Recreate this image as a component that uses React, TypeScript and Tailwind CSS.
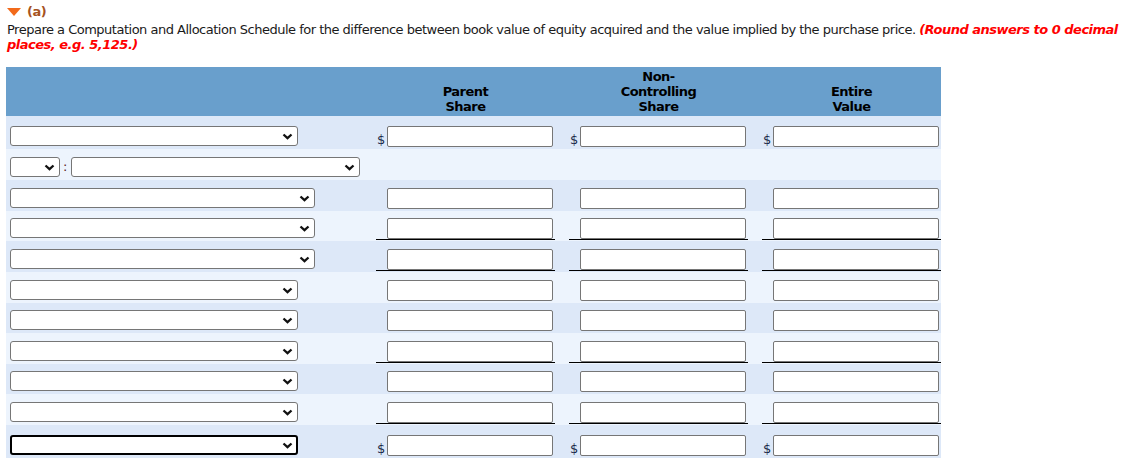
import React from 'react';

type Row = {
  h: string;
  selW?: string;
  pair?: boolean;
  dollar?: boolean;
  under?: boolean;
  focus?: boolean;
};

const rows: Row[] = [
  { h: 'h-[33px]', selW: 'w-[288px]', dollar: true },
  { h: 'h-[31px]', pair: true },
  { h: 'h-[31px]', selW: 'w-[305px]' },
  { h: 'h-[30px]', selW: 'w-[305px]', under: true },
  { h: 'h-[31px]', selW: 'w-[305px]', under: true },
  { h: 'h-[31px]', selW: 'w-[288px]' },
  { h: 'h-[30px]', selW: 'w-[288px]' },
  { h: 'h-[31px]', selW: 'w-[288px]', under: true },
  { h: 'h-[30px]', selW: 'w-[288px]' },
  { h: 'h-[31px]', selW: 'w-[288px]', under: true },
  { h: 'h-[33px]', selW: 'w-[288px]', dollar: true, focus: true },
];

const Chevron = () => (
  <svg width="11" height="7" viewBox="0 0 11 7" className="shrink-0">
    <polyline points="1.5,1.5 5.5,5.2 9.5,1.5" fill="none" stroke="#111" strokeWidth="2.3" />
  </svg>
);

const Select = ({ w, focus }: { w: string; focus?: boolean }) => (
  <div
    className={
      focus
        ? `${w} h-[20px] bg-white border-2 border-black rounded-[3px] flex items-center justify-end pr-[3px]`
        : `${w} h-[20px] bg-white border border-[#767676] rounded-[3px] flex items-center justify-end pr-[4px]`
    }
  >
    <Chevron />
  </div>
);

const Amount = ({ dollar, under }: { dollar?: boolean; under?: boolean }) => (
  <div className={`w-[179px] flex items-end ${under ? 'border-b border-black' : 'border-b border-transparent'}`}>
    <span className="w-[11px] text-[13px] leading-[15px] text-[#1b2a4a] pl-[1px]">{dollar ? '$' : ''}</span>
    <div className="w-[166px] h-[21px] bg-white border border-[#767676] rounded-[2px]" />
  </div>
);

export default function App() {
  return (
    <div className="pt-[4px] pl-[7px] font-['DejaVu_Sans','Verdana',sans-serif] text-[13px] tracking-[-0.5px] text-[#1a1a1a] bg-white min-h-[470px]">
      <div className="flex items-center h-[15px] leading-[15px]">
        <svg width="14" height="8" viewBox="0 0 14 8">
          <polygon points="0,0 14,0 7,8" fill="#f26a1b" />
        </svg>
        <span className="ml-[6px] font-bold text-[#a6531f]">(a)</span>
      </div>
      <p className="mt-[3px] leading-[15px] pr-[8px]">
        Prepare a Computation and Allocation Schedule for the difference between book value of equity acquired and the value implied by the purchase price.{' '}
        <span className="font-bold italic text-[#ff0000]">(Round answers to 0 decimal places, e.g. 5,125.)</span>
      </p>

      <div className="mt-[15px] ml-[-1px] w-[935px]">
        <div className="grid grid-cols-[363px_193px_193px_186px] h-[49px] bg-[#699fcc] font-bold text-black leading-[15px]">
          <div />
          <div className="pl-[7px] flex items-end pb-[2px]">
            <div className="w-[179px] text-center">Parent<br />Share</div>
          </div>
          <div className="pl-[7px] flex items-end pb-[2px]">
            <div className="w-[179px] text-center">Non-<br />Controlling<br />Share</div>
          </div>
          <div className="pl-[7px] flex items-end pb-[2px]">
            <div className="w-[179px] text-center">Entire<br />Value</div>
          </div>
        </div>

        {rows.map((r, i) => (
          <div
            key={i}
            className={`grid grid-cols-[363px_193px_193px_186px] ${r.h} ${i % 2 === 0 ? 'bg-[#dde8f8]' : 'bg-[#edf4fd]'}`}
          >
            <div className="pl-[4px] flex items-end pb-[3px]">
              {r.pair ? (
                <div className="flex items-center">
                  <Select w="w-[50px]" />
                  <span className="w-[11px] pl-[3px] text-[#5a1a1a]">:</span>
                  <Select w="w-[289px]" />
                </div>
              ) : (
                <Select w={r.selW ?? 'w-[288px]'} focus={r.focus} />
              )}
            </div>
            {r.pair ? (
              <>
                <div />
                <div />
                <div />
              </>
            ) : (
              <>
                <div className="pl-[7px] flex items-end pb-[1px]">
                  <Amount dollar={r.dollar} under={r.under} />
                </div>
                <div className="pl-[7px] flex items-end pb-[1px]">
                  <Amount dollar={r.dollar} under={r.under} />
                </div>
                <div className="pl-[7px] flex items-end pb-[1px]">
                  <Amount dollar={r.dollar} under={r.under} />
                </div>
              </>
            )}
          </div>
        ))}
      </div>
    </div>
  );
}
